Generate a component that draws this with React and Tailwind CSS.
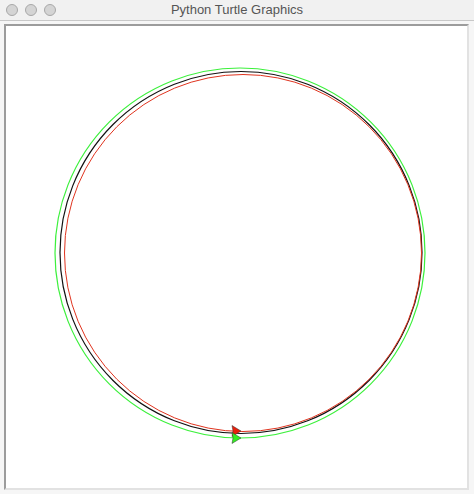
export default function App() {
  const arrow = (x, y) => `${x},${y} ${x - 9},${y - 5.5} ${x - 8},${y} ${x - 9},${y + 5.5}`;

  return (
    <div
      className="flex h-[494px] w-[474px] flex-col bg-[#ececec]"
      style={{ fontFamily: '"Liberation Sans", Arial, sans-serif' }}
    >
      {/* title bar */}
      <div className="relative flex h-[21px] items-center border-b border-[#c8c8c8] bg-[#f1f1f1]">
        <div className="flex items-center gap-[7px] pl-[6px]">
          <span className="h-[12px] w-[12px] rounded-full border border-[#a8a8a8] bg-[#d4d4d4]" />
          <span className="h-[12px] w-[12px] rounded-full border border-[#a8a8a8] bg-[#d4d4d4]" />
          <span className="h-[12px] w-[12px] rounded-full border border-[#a8a8a8] bg-[#d4d4d4]" />
        </div>
        <div className="absolute inset-0 flex items-center justify-center text-[13px] text-[#555]">
          Python Turtle Graphics
        </div>
      </div>

      {/* canvas frame */}
      <div className="flex-1 bg-[#f6f6f6] pl-[4px] pr-[5px] pt-[3px] pb-[4px]">
        <div className="h-full w-full border-2 border-t-[#9c9c9c] border-l-[#9c9c9c] border-r-[#e2e2e2] border-b-[#e2e2e2] bg-white">
          <svg width="100%" height="100%" viewBox="6 26 461 462" preserveAspectRatio="none">
            <circle cx="240" cy="253" r="185" fill="none" stroke="#3cf03c" strokeWidth="1.2" />
            <circle cx="241" cy="252.5" r="181" fill="none" stroke="#111" strokeWidth="1.2" />
            <circle cx="243" cy="253" r="178.5" fill="none" stroke="#e0341f" strokeWidth="1" />
            <polygon points={arrow(241, 431)} fill="#e8200c" stroke="#333" strokeWidth="0.5" />
            <polygon points={arrow(241, 438)} fill="#33ee22" stroke="#333" strokeWidth="0.5" />
          </svg>
        </div>
      </div>
    </div>
  );
}
